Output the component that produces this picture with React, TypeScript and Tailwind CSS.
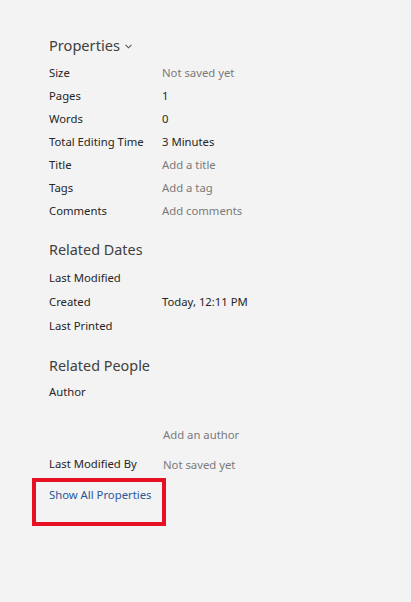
const rows: { label: string; value: string; muted?: boolean }[] = [
  { label: "Size", value: "Not saved yet", muted: true },
  { label: "Pages", value: "1" },
  { label: "Words", value: "0" },
  { label: "Total Editing Time", value: "3 Minutes" },
  { label: "Title", value: "Add a title", muted: true },
  { label: "Tags", value: "Add a tag", muted: true },
  { label: "Comments", value: "Add comments", muted: true },
];

const dates: { label: string; value: string }[] = [
  { label: "Last Modified", value: "" },
  { label: "Created", value: "Today, 12:11 PM" },
  { label: "Last Printed", value: "" },
];

function Row({ label, value, muted, h = "h-[23px]" }: { label: string; value: string; muted?: boolean; h?: string }) {
  return (
    <div className={`flex items-center ${h}`}>
      <div className="w-[113px] shrink-0 text-[#262626]">{label}</div>
      <div className={muted ? "text-[#7a7a7a]" : "text-[#262626]"}>{value}</div>
    </div>
  );
}

export default function App() {
  return (
    <div
      className="min-h-[602px] w-[411px] bg-[#f3f3f3] pl-[49px] pt-[35px] text-[11.3px] leading-[16px]"
      style={{ fontFamily: '"Noto Sans", "Open Sans", sans-serif' }}
    >
      <div className="flex h-[20px] items-center gap-[5px] text-[14.6px] text-[#404040]">
        Properties
        <svg width="7" height="5" viewBox="0 0 7 5" className="mt-[2px]">
          <path d="M0.5 0.8 L3.5 3.8 L6.5 0.8" fill="none" stroke="#555" strokeWidth="1.1" />
        </svg>
      </div>
      <div className="mt-[6px]">
        {rows.map((r) => (
          <Row key={r.label} {...r} />
        ))}
      </div>

      <div className="mt-[18px] flex h-[20px] items-center text-[14.4px] text-[#404040]">Related Dates</div>
      <div className="mt-[6px]">
        {dates.map((r) => (
          <Row key={r.label} {...r} h="h-[24px]" />
        ))}
      </div>

      <div className="mt-[18px] flex h-[20px] items-center text-[14.4px] text-[#404040]">Related People</div>
      <div className="mt-[4px] flex">
        <div className="w-[114px] shrink-0 pt-[4px] text-[#262626]">Author</div>
        <div className="flex flex-col">
          <div className="h-[44px]" />
          <div className="flex h-[22px] items-center text-[#7a7a7a]">Add an author</div>
        </div>
      </div>
      <div className="mt-[7px] flex h-[22px] items-center">
        <div className="w-[114px] shrink-0 text-[#262626]">Last Modified By</div>
        <div className="pt-[2px] text-[#7a7a7a]">Not saved yet</div>
      </div>

      <div className="-ml-[17px] mt-[3px] flex h-[48px] w-[134px] items-start border-4 border-[#e81123] pl-[13px] pt-[5px]">
        <span className="text-[#2b579a]">Show All Properties</span>
      </div>
    </div>
  );
}
